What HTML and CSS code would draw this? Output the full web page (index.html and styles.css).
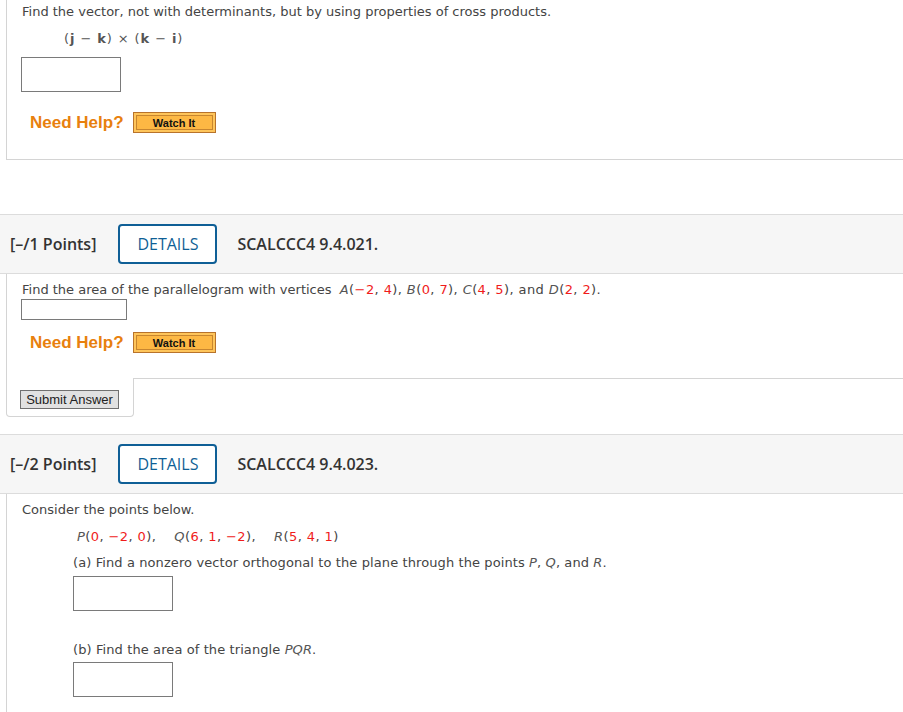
FILE: index.html
```html
<!DOCTYPE html>
<html>
<head>
    <meta charset="utf-8">
    <meta name="viewport" content="width=device-width, initial-scale=1">
    <title>Assignment</title>
    <link rel="stylesheet" href="styles.css">
</head>
<body>
    <main class="assignment">

        <div class="question-body question-body--closed">
            <p class="question-text">Find the vector, not with determinants, but by using properties of cross products.</p>
            <p class="question-math">(<b>j</b> &minus; <b>k</b>) &times; (<b>k</b> &minus; <b>i</b>)</p>
            <input type="text" class="answer-box">
            <div class="need-help">
                <span class="need-help__label">Need Help?</span>
                <button class="need-help__button">Watch It</button>
            </div>
        </div>

        <section class="question">
            <div class="question__header">
                <span class="question__points">[&ndash;/1 Points]</span>
                <button class="question__details">DETAILS</button>
                <span class="question__id">SCALCCC4 9.4.021.</span>
            </div>
            <div class="question-body question-body--small">
                <p class="question-text">Find the area of the parallelogram with vertices&nbsp; <span class="math"><i>A</i>(<span class="num">&minus;2</span>, <span class="num">4</span>), <i>B</i>(<span class="num">0</span>, <span class="num">7</span>), <i>C</i>(<span class="num">4</span>, <span class="num">5</span>), and <i>D</i>(<span class="num">2</span>, <span class="num">2</span>).</span></p>
                <input type="text" class="answer-box answer-box--short">
                <div class="need-help">
                    <span class="need-help__label">Need Help?</span>
                    <button class="need-help__button">Watch It</button>
                </div>
            </div>
            <div class="question__submit-row">
                <div class="question__submit-tab">
                    <button class="question__submit">Submit Answer</button>
                </div>
                <div class="question__submit-fill"></div>
            </div>
        </section>

        <section class="question question--last">
            <div class="question__header">
                <span class="question__points">[&ndash;/2 Points]</span>
                <button class="question__details">DETAILS</button>
                <span class="question__id">SCALCCC4 9.4.023.</span>
            </div>
            <div class="question-body question-body--open">
                <p class="question-text">Consider the points below.</p>
                <p class="question-points math"><i>P</i>(<span class="num">0</span>, <span class="num">&minus;2</span>, <span class="num">0</span>),&nbsp;&nbsp;&nbsp; <i>Q</i>(<span class="num">6</span>, <span class="num">1</span>, <span class="num">&minus;2</span>),&nbsp;&nbsp;&nbsp; <i>R</i>(<span class="num">5</span>, <span class="num">4</span>, <span class="num">1</span>)</p>
                <p class="question-part">(a) Find a nonzero vector orthogonal to the plane through the points <i>P</i>, <i>Q</i>, and <i>R</i>.</p>
                <input type="text" class="answer-box answer-box--part">
                <p class="question-part question-part--b">(b) Find the area of the triangle <i>PQR</i>.</p>
                <input type="text" class="answer-box answer-box--part answer-box--b">
            </div>
        </section>

    </main>
</body>
</html>
```

FILE: styles.css
```css
body {
    margin: 0;
    background: #fff;
    font-family: "DejaVu Sans", Verdana, sans-serif;
    font-size: 13px;
    color: #444;
}

p {
    margin: 0;
}

.assignment {
    width: 903px;
}

.question-body {
    margin-left: 6px;
    border-left: 1px solid #d4d4d4;
    padding-left: 15px;
}

.question-body--closed {
    padding-top: 3px;
    padding-bottom: 26px;
    border-bottom: 1px solid #d4d4d4;
    margin-bottom: 54px;
}

.question-body--small {
    padding-top: 7px;
    padding-bottom: 25px;
}

.question-body--open {
    padding-top: 7px;
    padding-bottom: 20px;
}

.question-text,
.question-math,
.question-points,
.question-part {
    line-height: 18px;
    white-space: nowrap;
}

.question-math {
    margin-top: 9px;
    padding-left: 42px;
    letter-spacing: 0.9px;
    color: #555;
}

.math {
    letter-spacing: 0.4px;
}

.question-points {
    margin-top: 9px;
    padding-left: 55px;
}

.question-part {
    margin-top: 8px;
    padding-left: 51px;
    letter-spacing: 0.1px;
}

.question-part--b {
    margin-top: 30px;
}

.num {
    color: #f01b1b;
}

i {
    color: #555;
}

.answer-box {
    display: block;
    box-sizing: border-box;
    width: 100px;
    height: 35px;
    margin: 9px 0 0 -1px;
    border: 1px solid #7a7a7a;
    background: #fff;
    padding: 0;
}

.answer-box--short {
    width: 106px;
    height: 21px;
    margin-top: 0;
}

.answer-box--part {
    width: 100px;
    height: 35px;
    margin: 4px 0 0 51px;
}

.answer-box--b {
    margin-top: 3px;
}

.need-help {
    display: flex;
    align-items: center;
    height: 21px;
    margin-top: 20px;
    padding-left: 8px;
}

.question-body--small .need-help {
    margin-top: 12px;
}

.need-help__label {
    font-family: "Liberation Sans", Arial, sans-serif;
    font-weight: bold;
    font-size: 17px;
    color: #e8800e;
}

.need-help__button {
    box-sizing: border-box;
    width: 83px;
    height: 21px;
    margin-left: 9px;
    padding: 0;
    border: 1px solid #b8732b;
    background: #fdb844;
    box-shadow: inset 0 0 0 2px #fec55b, inset 0 0 0 3px #c8862f;
    font-family: "Liberation Sans", Arial, sans-serif;
    font-weight: bold;
    font-size: 11px;
    color: #111;
}

.question__header {
    display: flex;
    align-items: center;
    height: 58px;
    padding-left: 10px;
    background: #f6f6f6;
    border-top: 1px solid #dcdcdc;
    border-bottom: 1px solid #dcdcdc;
    font-family: "Open Sans", sans-serif;
    font-size: 16px;
    color: #333;
}

.question__points {
    font-weight: 600;
}

.question__details {
    box-sizing: border-box;
    width: 99px;
    height: 40px;
    margin-left: 22px;
    padding: 0;
    border: 2px solid #0f5f96;
    border-radius: 4px;
    background: #fff;
    font-family: "Open Sans", sans-serif;
    font-size: 16px;
    color: #0f5f96;
}

.question__id {
    margin-left: 20px;
    font-weight: 600;
}

.question__submit-row {
    display: flex;
    margin-left: 6px;
    margin-bottom: 17px;
}

.question__submit-tab {
    padding: 12px 14px 7px 13px;
    border: 1px solid #d4d4d4;
    border-top: none;
    border-radius: 0 0 4px 4px;
}

.question__submit-fill {
    flex: 1;
    border-top: 1px solid #d4d4d4;
}

.question__submit {
    display: block;
    box-sizing: border-box;
    width: 99px;
    height: 19px;
    padding: 0;
    border: 1px solid #707070;
    background: #e1e1e1;
    font-family: "Liberation Sans", Arial, sans-serif;
    font-size: 13px;
    color: #222;
}
```
